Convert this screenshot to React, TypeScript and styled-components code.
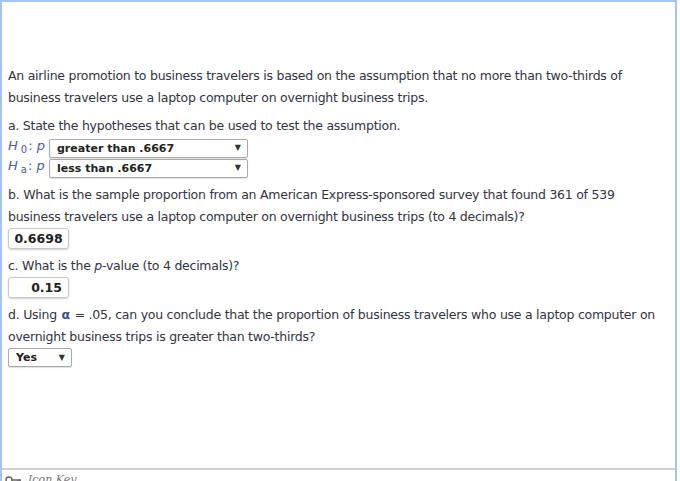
import React from "react"
import styled, { createGlobalStyle } from "styled-components"

const GlobalStyle = createGlobalStyle`
  html, body {
    margin: 0;
    padding: 0;
    background: #ffffff;
  }
  body {
    font-family: "DejaVu Sans", Verdana, sans-serif;
    overflow: hidden;
  }
`

const Frame = styled.div`
  width: 673px;
  height: 520px;
  border: 2px solid #a6c3f3;
  border-bottom: none;
  background: #fff;
  display: flex;
  flex-direction: column;
`

const Content = styled.div`
  padding: 63px 6px 0 6px;
  height: 403px;
  color: #333344;
  font-size: 12.5px;
  letter-spacing: -0.25px;
  line-height: 22px;
`

const Para = styled.p<{ top?: number; gap?: number }>`
  margin: ${(p) => p.top ?? 0}px 0 ${(p) => p.gap ?? 0}px 0;
`

const HypRow = styled.div`
  display: flex;
  align-items: center;
  height: 20px;
`

const HypLabel = styled.span`
  width: 41px;
  color: #4a5e92;
  font-size: 13px;
  white-space: nowrap;
  letter-spacing: 0;
  sub {
    font-size: 10px;
    vertical-align: -3px;
    margin: 0 1px 0 3px;
  }
`

const Alpha = styled.span`
  display: inline-block;
  font-family: "DejaVu Sans", sans-serif;
  font-weight: bold;
  color: #3a4a8a;
  padding: 0 1px;
`

const Select = styled.div<{ w: number }>`
  box-sizing: border-box;
  width: ${(p) => p.w}px;
  height: 19px;
  border: 1px solid #a9a9a9;
  border-radius: 2px;
  box-shadow: 0 1px 1px rgba(0, 0, 0, 0.12);
  display: flex;
  align-items: center;
  justify-content: space-between;
  padding: 0 6px 0 7px;
  font-size: 11px;
  font-weight: bold;
  letter-spacing: 0;
  color: #222;
  line-height: 1;
  background: #fff;
`

const Arrow = styled.span`
  font-size: 8px;
  color: #333;
`

const Answer = styled.div<{ align?: string }>`
  box-sizing: border-box;
  width: 61px;
  height: 21px;
  border: 1px solid #c8c8c8;
  border-radius: 3px;
  box-shadow: 0 1px 2px rgba(0, 0, 0, 0.18);
  display: flex;
  align-items: center;
  justify-content: ${(p) => p.align ?? "center"};
  padding: 0 6px;
  font-weight: bold;
  font-size: 12.5px;
  letter-spacing: 0;
  color: #222;
`

const Footer = styled.div`
  border-top: 2px solid #cfcfcf;
  display: flex;
  align-items: center;
  gap: 6px;
  padding: 3px 0 0 3px;
  color: #777;
  font-family: "DejaVu Serif", serif;
  font-style: italic;
  font-size: 11px;
`

const Key = () => (
  <svg width="17" height="10" viewBox="0 0 17 10">
    <circle cx="4" cy="5" r="3" fill="none" stroke="#666" strokeWidth="1.4" />
    <path d="M7 5 H16 M13 5 V8 M15 5 V7" stroke="#666" strokeWidth="1.4" fill="none" />
  </svg>
)

const Hyp = ({ sub, value }: { sub: string; value: string }) => (
  <HypRow>
    <HypLabel>
      <i>H</i>
      <sub>{sub}</sub>: <i>p</i>
    </HypLabel>
    <Select w={199}>
      <span>{value}</span>
      <Arrow>▼</Arrow>
    </Select>
  </HypRow>
)

export default function App() {
  return (
    <>
      <GlobalStyle />
      <Frame>
        <Content>
          <Para gap={6}>
            An airline promotion to business travelers is based on the assumption that no more than two-thirds of
            business travelers use a laptop computer on overnight business trips.
          </Para>
          <Para gap={1}>a. State the hypotheses that can be used to test the assumption.</Para>
          <Hyp sub="0" value="greater than .6667" />
          <Hyp sub="a" value="less than .6667" />
          <Para top={6}>
            b. What is the sample proportion from an American Express-sponsored survey that found 361 of 539
            business travelers use a laptop computer on overnight business trips (to 4 decimals)?
          </Para>
          <Answer>0.6698</Answer>
          <Para top={6}>
            c. What is the <i>p</i>-value (to 4 decimals)?
          </Para>
          <Answer align="flex-end">0.15</Answer>
          <Para top={6}>
            d. Using <Alpha>α</Alpha> = .05, can you conclude that the proportion of business travelers who use a
            laptop computer on overnight business trips is greater than two-thirds?
          </Para>
          <Select w={64}>
            <span>Yes</span>
            <Arrow>▼</Arrow>
          </Select>
        </Content>
        <Footer>
          <Key />
          <span>Icon Key</span>
        </Footer>
      </Frame>
    </>
  )
}
